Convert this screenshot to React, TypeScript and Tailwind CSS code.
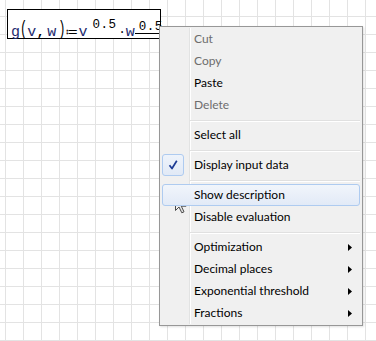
import React from "react";

type ItemProps = {
  label: string;
  disabled?: boolean;
  hover?: boolean;
  checked?: boolean;
  sub?: boolean;
};

function Item({ label, disabled, hover, checked, sub }: ItemProps) {
  return (
    <div
      className={`relative z-10 flex h-[22px] items-center rounded-[3px] border ${
        hover
          ? "border-[#aecbf0] bg-[linear-gradient(to_bottom,#f1f5fb,#e2eaf7)]"
          : "border-transparent"
      }`}
    >
      <div className="flex w-[31px] items-center justify-start">
        {checked ? (
          <div className="ml-[-1px] flex h-[22px] w-[22px] items-center justify-center rounded-[3px] border border-[#aecbf0] bg-[linear-gradient(to_bottom,#eef3fb,#e1e9f6)]">
            <svg width="12" height="12" viewBox="0 0 12 12">
              <path
                d="M2.5 6.2 L5 9.5 L9.8 1.8"
                fill="none"
                stroke="#1c3a94"
                strokeWidth="1.7"
                strokeLinejoin="round"
              />
            </svg>
          </div>
        ) : null}
      </div>
      <span
        className={`whitespace-nowrap text-[12px] leading-none ${
          disabled ? "text-[#6d6d6d]" : "text-black"
        }`}
      >
        {label}
      </span>
      {sub ? (
        <svg className="ml-auto mr-[7px]" width="4" height="7" viewBox="0 0 4 7">
          <path d="M0 0 L4 3.5 L0 7 Z" fill="#000" />
        </svg>
      ) : null}
    </div>
  );
}

function Sep() {
  return (
    <div className="relative z-10 h-[8px] pl-[28px] pt-[4px]">
      <div className="h-px bg-[#e0e0e0]" />
      <div className="h-px bg-white" />
    </div>
  );
}

export default function App() {
  return (
    <div
      className="relative h-[341px] w-[376px] overflow-hidden bg-white bg-[linear-gradient(to_right,#e3e3e3_1px,transparent_1px),linear-gradient(to_bottom,#e3e3e3_1px,transparent_1px)] bg-[size:18px_18px] bg-[position:5px_16px]"
      style={{ fontFamily: 'Lato, "Noto Sans", "Liberation Sans", sans-serif' }}
    >
      {/* formula box */}
      <div className="pl-[7px] pt-[9px]">
        <div
          className="h-[30px] w-[154px] whitespace-nowrap border border-black bg-white pl-[3px] text-[15px] leading-[30px] text-black"
          style={{ fontFamily: '"Liberation Mono", "DejaVu Sans Mono", monospace' }}
        >
          <span className="inline-block text-[#1d2a6e]">g</span>
          <span className="inline-block origin-[50%_20px] scale-y-[1.75] text-[12px]">(</span>
          <span className="inline-block text-[#1d2a6e]">v</span>
          <span className="inline-block">,</span>
          <span className="ml-[2px] inline-block text-[#1d2a6e]">w</span>
          <span className="ml-[2px] inline-block origin-[50%_20px] scale-y-[1.75] text-[12px]">)</span>
          <span
            className="inline-block text-[13px]"
            style={{ fontFamily: '"DejaVu Sans", sans-serif' }}
          >
            ≔
          </span>
          <span className="inline-block text-[#1d2a6e]">v</span>
          <span className="ml-[5px] inline-block align-[8px] text-[12.5px] tracking-[0.5px]">0.5</span>
          <span className="ml-[2px] inline-block text-[12px]">·</span>
          <span className="inline-block text-[#1d2a6e]">w</span>
          <span className="inline-block h-[15px] w-[26px] border-b border-r border-black pl-[4px] pt-[2px] align-[6px] text-[12.5px] leading-[13px] tracking-[0.5px]">
            0.5
          </span>
        </div>
      </div>

      {/* context menu */}
      <div className="absolute left-[159px] top-[26px] h-[300px] w-[204px] border border-[#979797] bg-[#f0f0f0] px-[2px] py-[1px] shadow-[1px_1px_2px_rgba(0,0,0,0.12)]">
        <div className="pointer-events-none absolute bottom-[1px] left-[29px] top-[1px] flex">
          <div className="w-px bg-[#e2e3e3]" />
          <div className="w-px bg-white" />
        </div>
        <Item label="Cut" disabled />
        <Item label="Copy" disabled />
        <Item label="Paste" />
        <Item label="Delete" disabled />
        <Sep />
        <Item label="Select all" />
        <Sep />
        <Item label="Display input data" checked />
        <Sep />
        <Item label="Show description" hover />
        <Item label="Disable evaluation" />
        <Sep />
        <Item label="Optimization" sub />
        <Item label="Decimal places" sub />
        <Item label="Exponential threshold" sub />
        <Item label="Fractions" sub />
      </div>

      {/* mouse cursor */}
      <svg
        className="absolute left-[174px] top-[194px]"
        width="14"
        height="21"
        viewBox="0 0 14 21"
      >
        <defs>
          <linearGradient id="cg" x1="0" y1="0" x2="1" y2="1">
            <stop offset="0" stopColor="#ffffff" />
            <stop offset="1" stopColor="#d8d8d8" />
          </linearGradient>
        </defs>
        <path
          d="M1.5 1.5 L1.5 16.5 L5 13 L7.8 18.8 L10 17.8 L7.3 12.2 L12 12.2 Z"
          fill="url(#cg)"
          stroke="#4a4a4a"
          strokeWidth="1"
          strokeLinejoin="round"
        />
      </svg>
    </div>
  );
}
